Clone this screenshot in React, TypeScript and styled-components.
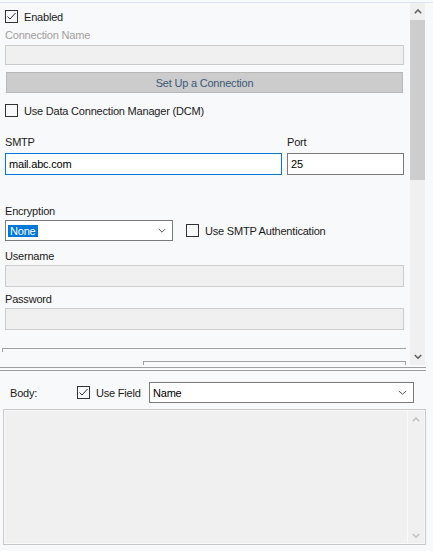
import styled, { createGlobalStyle } from 'styled-components';

const GlobalStyle = createGlobalStyle`
  html, body {
    margin: 0;
    padding: 0;
    background: #f8f9fb;
  }
  body {
    font-family: "Liberation Sans", Arial, sans-serif;
    font-size: 11px;
    letter-spacing: -0.2px;
    color: #1a1a1a;
  }
  * {
    box-sizing: border-box;
  }
`;

const Window = styled.div`
  width: 433px;
  height: 551px;
  overflow: hidden;
  padding-top: 2px;
  background: #f8f9fb;
`;

const Frame = styled.div`
  border-top: 1px solid #dbe4f0;
`;

const TopPane = styled.div`
  display: flex;
  width: 425px;
  height: 362px;
`;

const Content = styled.div`
  flex: 1;
  overflow: hidden;
  display: flex;
  flex-direction: column;
  padding: 0 6px 0 5px;
`;

const ScrollBar = styled.div`
  width: 15px;
  display: flex;
  flex-direction: column;
  background: #f0f0f0;
`;

const ScrollArrow = styled.div`
  height: 17px;
  display: flex;
  align-items: center;
  justify-content: center;
`;

const Thumb = styled.div`
  height: 160px;
  background: #cdcdcd;
`;

const Track = styled.div`
  flex: 1;
`;

const CheckRow = styled.label<{ $mt?: number }>`
  display: flex;
  align-items: center;
  gap: 6px;
  height: 13px;
  margin-top: ${(p) => p.$mt ?? 0}px;
  white-space: nowrap;
`;

const Box = styled.span`
  width: 13px;
  height: 13px;
  flex: none;
  border: 1px solid #333333;
  display: flex;
  align-items: center;
  justify-content: center;
`;

const Label = styled.div<{ $mt?: number; $muted?: boolean }>`
  line-height: 14px;
  height: 14px;
  margin-top: ${(p) => p.$mt ?? 0}px;
  color: ${(p) => (p.$muted ? '#a0a0a0' : '#1a1a1a')};
  white-space: nowrap;
`;

const TextBox = styled.div<{ $mt?: number; $h?: number; $variant?: 'disabled' | 'focused' | 'normal' }>`
  height: ${(p) => p.$h ?? 22}px;
  margin-top: ${(p) => p.$mt ?? 0}px;
  padding: 0 3px;
  display: flex;
  align-items: center;
  color: #000;
  background: ${(p) => (p.$variant === 'disabled' ? '#f0f0f0' : '#ffffff')};
  border: 1px solid
    ${(p) =>
      p.$variant === 'disabled' ? '#cccccc' : p.$variant === 'focused' ? '#0078d7' : '#7a7a7a'};
`;

const SetupButton = styled.div<{ $mt?: number }>`
  height: 21px;
  margin: ${(p) => p.$mt ?? 0}px 1px 0;
  background: #cccccc;
  border: 1px solid #b8b8b8;
  color: #3b5878;
  display: flex;
  align-items: center;
  justify-content: center;
`;

const ServerGrid = styled.div`
  display: grid;
  grid-template-columns: 277px 1fr;
  column-gap: 5px;
`;

const SecurityRow = styled.div<{ $mt?: number }>`
  display: flex;
  align-items: center;
  gap: 13px;
  margin-top: ${(p) => p.$mt ?? 0}px;
`;

const Select = styled.div<{ $w?: number; $push?: boolean }>`
  width: ${(p) => (p.$w ? `${p.$w}px` : 'auto')};
  height: 21px;
  margin-left: ${(p) => (p.$push ? 'auto' : '0')};
  background: #ffffff;
  border: 1px solid #7a7a7a;
  display: flex;
  align-items: center;
  padding: 0 6px 0 2px;
  color: #000;
`;

const SelectValue = styled.span<{ $selected?: boolean }>`
  flex: 1;
  display: flex;
  span {
    height: 12px;
    line-height: 12px;
    padding: 0 ${(p) => (p.$selected ? 2 : 1)}px;
    background: ${(p) => (p.$selected ? '#0078d7' : 'transparent')};
    color: ${(p) => (p.$selected ? '#ffffff' : '#000000')};
  }
`;

const GroupEdge = styled.div<{ $mt: number; $ml: number; $closed?: boolean }>`
  flex: none;
  height: 4px;
  margin: ${(p) => p.$mt}px -2px 0 ${(p) => p.$ml}px;
  border-top: 1px solid #a0a0a0;
  border-left: 1px solid #a0a0a0;
  border-right: ${(p) => (p.$closed ? '1px solid #a0a0a0' : 'none')};
`;

const Splitter = styled.div`
  width: 426px;
  height: 4px;
  margin-top: 2px;
  border-top: 1px solid #a0a0a0;
  border-bottom: 1px solid #a0a0a0;
`;

const BodyRow = styled.div`
  display: flex;
  align-items: center;
  margin-top: 11px;
  padding: 0 19px 0 10px;
`;

const BodyLabel = styled.span`
  width: 67px;
  flex: none;
`;

const TextArea = styled.div`
  display: flex;
  justify-content: flex-end;
  width: 423px;
  height: 136px;
  margin: 6px 0 0 3px;
  background: #f0f0f0;
  border: 1px solid #c8c8c8;
  box-shadow: inset 0 0 0 1px #f9f9f9;
  padding: 1px;
`;

const AreaScroll = styled.div`
  width: 17px;
  border-left: 1px solid #f9f9f9;
  display: flex;
  flex-direction: column;
  justify-content: space-between;
  padding: 6px 0 5px;
  align-items: center;
`;

function Chevron({ dir, color, w = 8, h = 5, sw = 1.6 }: { dir: 'up' | 'down'; color: string; w?: number; h?: number; sw?: number }) {
  const pts = dir === 'up' ? `0.8,${h - 0.8} ${w / 2},1 ${w - 0.8},${h - 0.8}` : `0.8,1 ${w / 2},${h - 0.8} ${w - 0.8},1`;
  return (
    <svg width={w} height={h} viewBox={`0 0 ${w} ${h}`}>
      <polyline points={pts} fill="none" stroke={color} strokeWidth={sw} />
    </svg>
  );
}

function Check({ checked }: { checked?: boolean }) {
  return (
    <Box>
      {checked && (
        <svg width="11" height="11" viewBox="0 0 11 11">
          <polyline points="1.5,5.5 4,8 9.5,2" fill="none" stroke="#333333" strokeWidth="1" />
        </svg>
      )}
    </Box>
  );
}

export default function App() {
  return (
    <Window>
      <GlobalStyle />
      <Frame>
        <TopPane>
          <Content>
            <CheckRow $mt={7}>
              <Check checked />
              Enabled
            </CheckRow>
            <Label $mt={5} $muted>
              Connection Name
            </Label>
            <TextBox $mt={3} $h={20} $variant="disabled" />
            <SetupButton $mt={7}>Set Up a Connection</SetupButton>
            <CheckRow $mt={11}>
              <Check />
              Use Data Connection Manager (DCM)
            </CheckRow>

            <ServerGrid>
              <Label $mt={18}>SMTP</Label>
              <Label $mt={18}>Port</Label>
              <TextBox $mt={4} $variant="focused">
                mail.abc.com
              </TextBox>
              <TextBox $mt={4}>25</TextBox>
            </ServerGrid>

            <Label $mt={29}>Encryption</Label>
            <SecurityRow $mt={2}>
              <Select $w={168}>
                <SelectValue $selected>
                  <span>None</span>
                </SelectValue>
                <Chevron dir="down" color="#555555" w={8} h={5} sw={1} />
              </Select>
              <CheckRow>
                <Check />
                Use SMTP Authentication
              </CheckRow>
            </SecurityRow>

            <Label $mt={8}>Username</Label>
            <TextBox $mt={2} $variant="disabled" />
            <Label $mt={5}>Password</Label>
            <TextBox $mt={2} $variant="disabled" />

            <GroupEdge $mt={18} $ml={-3} />
            <GroupEdge $mt={9} $ml={138} $closed />
          </Content>
          <ScrollBar>
            <ScrollArrow>
              <Chevron dir="up" color="#606060" />
            </ScrollArrow>
            <Thumb />
            <Track />
            <ScrollArrow>
              <Chevron dir="down" color="#606060" />
            </ScrollArrow>
          </ScrollBar>
        </TopPane>
      </Frame>
      <Splitter />
      <BodyRow>
        <BodyLabel>Body:</BodyLabel>
        <CheckRow>
          <Check checked />
          Use Field
        </CheckRow>
        <Select $w={265} $push>
          <SelectValue>
            <span>Name</span>
          </SelectValue>
          <Chevron dir="down" color="#555555" w={9} h={5} sw={1} />
        </Select>
      </BodyRow>
      <TextArea>
        <AreaScroll>
          <Chevron dir="up" color="#c0c0c0" />
          <Chevron dir="down" color="#c0c0c0" />
        </AreaScroll>
      </TextArea>
    </Window>
  );
}
